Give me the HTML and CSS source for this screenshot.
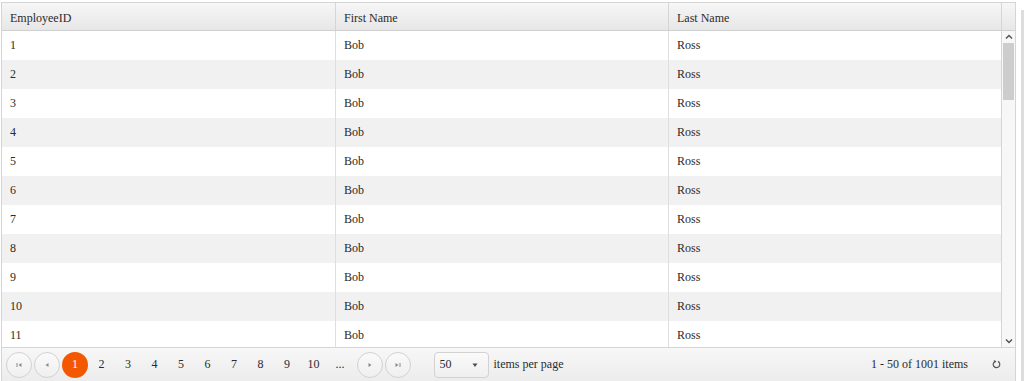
FILE: index.html
```html
<!DOCTYPE html>
<html lang="en">
<head>
    <meta charset="UTF-8">
    <title>Employees Grid</title>
    <link rel="stylesheet" href="styles.css">
</head>
<body>
    <div class="page">
        <!-- Data grid -->
        <div class="grid">
            <div class="grid-header">
                <div class="th">EmployeeID</div>
                <div class="th">First Name</div>
                <div class="th">Last Name</div>
                <div class="th th-scroll"></div>
            </div>

            <div class="grid-body">
                <div class="rows">
                    <div class="row"><div class="td">1</div><div class="td">Bob</div><div class="td">Ross</div></div>
                    <div class="row alt"><div class="td">2</div><div class="td">Bob</div><div class="td">Ross</div></div>
                    <div class="row"><div class="td">3</div><div class="td">Bob</div><div class="td">Ross</div></div>
                    <div class="row alt"><div class="td">4</div><div class="td">Bob</div><div class="td">Ross</div></div>
                    <div class="row"><div class="td">5</div><div class="td">Bob</div><div class="td">Ross</div></div>
                    <div class="row alt"><div class="td">6</div><div class="td">Bob</div><div class="td">Ross</div></div>
                    <div class="row"><div class="td">7</div><div class="td">Bob</div><div class="td">Ross</div></div>
                    <div class="row alt"><div class="td">8</div><div class="td">Bob</div><div class="td">Ross</div></div>
                    <div class="row"><div class="td">9</div><div class="td">Bob</div><div class="td">Ross</div></div>
                    <div class="row alt"><div class="td">10</div><div class="td">Bob</div><div class="td">Ross</div></div>
                    <div class="row"><div class="td">11</div><div class="td">Bob</div><div class="td">Ross</div></div>
                </div>

                <!-- Vertical scrollbar -->
                <div class="vscroll">
                    <svg class="vscroll-arrow" viewBox="0 0 8 8"><path d="M1 5.5L4 2.5L7 5.5" /></svg>
                    <div class="vscroll-track"><div class="vscroll-thumb"></div></div>
                    <svg class="vscroll-arrow" viewBox="0 0 8 8"><path d="M1 2.5L4 5.5L7 2.5" /></svg>
                </div>
            </div>

            <!-- Pager -->
            <div class="pager">
                <a class="pager-nav" href="#"><svg viewBox="0 0 8 8"><path d="M1.5 2h1v4h-1z M6.5 2v4L3.5 4z" /></svg></a>
                <a class="pager-nav" href="#"><svg viewBox="0 0 8 8"><path d="M5.5 2v4L2.5 4z" /></svg></a>
                <div class="pager-numbers">
                    <span class="pager-num current">1</span>
                    <a class="pager-num" href="#">2</a>
                    <a class="pager-num" href="#">3</a>
                    <a class="pager-num" href="#">4</a>
                    <a class="pager-num" href="#">5</a>
                    <a class="pager-num" href="#">6</a>
                    <a class="pager-num" href="#">7</a>
                    <a class="pager-num" href="#">8</a>
                    <a class="pager-num" href="#">9</a>
                    <a class="pager-num" href="#">10</a>
                    <a class="pager-num pager-more" href="#">...</a>
                </div>
                <a class="pager-nav pager-next" href="#"><svg viewBox="0 0 8 8"><path d="M2.5 2v4L5.5 4z" /></svg></a>
                <a class="pager-nav" href="#"><svg viewBox="0 0 8 8"><path d="M1.5 2v4L4.5 4z M5.5 2h1v4h-1z" /></svg></a>

                <div class="page-size">
                    <span class="page-size-value">50</span>
                    <svg class="page-size-arrow" viewBox="0 0 8 8"><path d="M1.5 2.5h5L4 6z" /></svg>
                </div>
                <span class="pager-label">items per page</span>

                <span class="pager-info">1 - 50 of 1001 items</span>
                <a class="pager-refresh" href="#">
                    <svg viewBox="0 0 12 12"><path d="M7.6 2.6A3.6 3.6 0 1 1 4.2 2.7" /><path class="fill" d="M3 1.2L6 2.4L3.8 4.6z" /></svg>
                </a>
            </div>
        </div>

        <!-- Browser scrollbar edge -->
        <div class="page-scroll"></div>
    </div>
</body>
</html>
```

FILE: styles.css
```css
/* Page */
body {
    margin: 0;
    font-family: "Liberation Serif", "Times New Roman", serif;
    font-size: 12px;
    color: #2b2b2b;
    background: #ffffff;
    overflow: hidden;
}

.page {
    display: flex;
    align-items: flex-start;
    padding: 2px 0 0 1px;
    height: 379px;
}

/* Grid frame */
.grid {
    width: 1013px;
    border: 1px solid #d5d5d5;
    border-bottom: none;
    display: flex;
    flex-direction: column;
    height: 378px;
}

/* Header row */
.grid-header {
    display: grid;
    grid-template-columns: 334px 333px 333px 13px;
    height: 27px;
    background: linear-gradient(#f6f6f6, #e7e7e7);
    border-bottom: 1px solid #cfcfcf;
}

.th {
    display: flex;
    align-items: center;
    padding: 2px 0 0 8px;
    border-right: 1px solid #d5d5d5;
    line-height: 1;
}

.th-scroll {
    padding: 0;
    border-right: none;
}

/* Body */
.grid-body {
    display: flex;
    height: 316px;
    overflow: hidden;
}

.rows {
    width: 1000px;
    overflow: hidden;
}

.row {
    display: grid;
    grid-template-columns: 334px 333px 333px;
    height: 29px;
    background: #ffffff;
}

.row.alt {
    background: #f1f1f1;
}

.td {
    display: flex;
    align-items: center;
    padding-left: 8px;
    border-right: 1px solid #dedede;
}

.td:last-child {
    border-right: 1px solid #d5d5d5;
}

/* Vertical scrollbar */
.vscroll {
    width: 13px;
    display: flex;
    flex-direction: column;
    align-items: center;
    background: #f7f7f7;
}

.vscroll-arrow {
    width: 8px;
    height: 8px;
    margin: 2px 0;
    fill: none;
    stroke: #505050;
    stroke-width: 1.4;
}

.vscroll-track {
    flex: 1;
    width: 100%;
}

.vscroll-thumb {
    height: 57px;
    background: #cdcdcd;
    margin: 0 1px;
}

/* Pager */
.pager {
    display: flex;
    align-items: center;
    height: 33px;
    padding: 0 6px 0 4px;
    border-top: 1px solid #d5d5d5;
    background: linear-gradient(#f7f7f7, #ececec);
}

.pager a {
    color: #2b2b2b;
    text-decoration: none;
}

.pager-nav {
    box-sizing: border-box;
    width: 26px;
    height: 26px;
    margin-right: 2px;
    border: 1px solid #d2d2d2;
    border-radius: 50%;
    background: linear-gradient(#fafafa, #efefef);
    display: flex;
    align-items: center;
    justify-content: center;
}

.pager-nav svg {
    width: 8px;
    height: 8px;
    fill: #8a8a8a;
}

.pager-numbers {
    display: flex;
    align-items: center;
}

.pager-num {
    width: 26px;
    height: 26px;
    margin-right: 0.5px;
    display: flex;
    align-items: center;
    justify-content: center;
}

.pager-num.current {
    border-radius: 50%;
    background: #f35800;
    color: #ffffff;
}

.pager-more {
    color: #777777;
}

.pager-next {
    margin-left: 3px;
}

/* Page size dropdown */
.page-size {
    box-sizing: border-box;
    width: 55px;
    height: 26px;
    margin-left: 21px;
    padding: 0 9px 0 5px;
    border: 1px solid #d2d2d2;
    border-radius: 4px;
    background: linear-gradient(#fafafa, #efefef);
    display: flex;
    align-items: center;
    justify-content: space-between;
}

.page-size-arrow {
    width: 8px;
    height: 8px;
    fill: #4a4a4a;
}

.pager-label {
    margin-left: 5px;
}

.pager-info {
    margin-left: auto;
    margin-right: 15px;
}

.pager-refresh {
    width: 26px;
    height: 26px;
    display: flex;
    align-items: center;
    justify-content: center;
}

.pager-refresh svg {
    width: 11px;
    height: 11px;
    fill: none;
    stroke: #555555;
    stroke-width: 1.3;
}

.pager-refresh svg .fill {
    fill: #555555;
    stroke: none;
}

/* Window scrollbar edge */
.page-scroll {
    width: 3px;
    height: 371px;
    margin: 8px 0 0 5px;
    background: #dddddd;
}
```
